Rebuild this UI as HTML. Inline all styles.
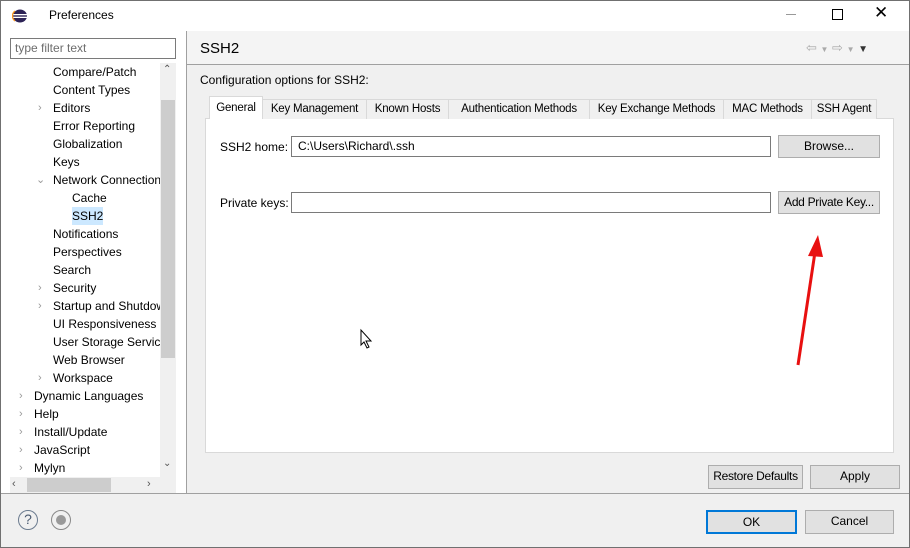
<!DOCTYPE html>
<html><head><style>
*{box-sizing:border-box;margin:0;padding:0}
body{width:910px;height:548px;position:relative;background:#f0f0f0;font-family:"Liberation Sans",sans-serif;font-size:12px;color:#000;overflow:hidden}
.a{position:absolute}
.btn{position:absolute;background:#e1e1e1;border:1px solid #adadad;text-align:center;line-height:21px;font-size:12px}
.tree div{position:absolute;white-space:nowrap;height:18px;line-height:18px}
.chev{color:#999;font-size:11px}
.tab{position:absolute;top:99px;height:20px;line-height:19px;border:1px solid #d9d9d9;border-bottom:none;background:#f0f0f0;font-size:11.5px;text-align:center;white-space:nowrap;overflow:hidden;letter-spacing:-0.2px}
</style></head><body>
<div class="a" style="left:0;top:0;width:910px;height:548px;border:1px solid #707070"></div>
<div class="a" style="left:1px;top:1px;width:908px;height:30px;background:#fff"></div>
<svg class="a" style="left:12px;top:8px" width="16" height="16"><ellipse cx="8" cy="8" rx="7" ry="6.5" fill="#2c2255"/><rect x="1" y="6" width="14" height="1.3" fill="#fff"/><rect x="1" y="8.7" width="14" height="1.3" fill="#fff"/><path d="M3 3 A7 6.5 0 0 0 3 13" stroke="#f7941e" stroke-width="1.3" fill="none"/></svg>
<div class="a" style="left:49px;top:8px;font-size:12px">Preferences</div>
<div class="a" style="left:786px;top:14px;width:10px;height:1px;background:#999"></div>
<div class="a" style="left:832px;top:9px;width:11px;height:11px;border:1px solid #000"></div>
<div class="a" style="left:874px;top:3px;font-size:17px">✕</div>

<div class="a" style="left:1px;top:31px;width:185px;height:462px;background:#fff"></div>
<div class="a" style="left:10px;top:38px;width:166px;height:21px;border:1px solid #7a7a7a;background:#fff;color:#6d6d6d;line-height:19px;padding-left:4px">type filter text</div>
<div class="a" style="left:160px;top:63px;width:16px;height:414px;background:#f0f0f0"></div>
<div class="a" style="left:161px;top:100px;width:14px;height:258px;background:#cdcdcd"></div>
<div class="a" style="left:163px;top:64px;font-size:10px;color:#555">&#8963;</div>
<div class="a" style="left:163px;top:458px;font-size:10px;color:#555">&#8964;</div>
<div class="a" style="left:10px;top:477px;width:166px;height:16px;background:#f0f0f0"></div>
<div class="a" style="left:27px;top:478px;width:84px;height:14px;background:#cdcdcd"></div>
<div class="a" style="left:12px;top:478px;color:#555;font-size:11px">‹</div>
<div class="a" style="left:147px;top:478px;color:#555;font-size:11px">›</div>
<div class="a" style="left:72px;top:207px;width:31px;height:18px;background:#cce8ff"></div>
<div class="tree">
<div style="left:53px;top:63px">Compare/Patch</div>
<div style="left:53px;top:81px">Content Types</div>
<div class="chev" style="left:38px;top:99px">›</div><div style="left:53px;top:99px">Editors</div>
<div style="left:53px;top:117px">Error Reporting</div>
<div style="left:53px;top:135px">Globalization</div>
<div style="left:53px;top:153px">Keys</div>
<div class="chev" style="left:36px;top:171px">⌄</div><div style="left:53px;top:171px;width:107px;overflow:hidden">Network Connections</div>
<div style="left:72px;top:189px">Cache</div>
<div style="left:72px;top:207px">SSH2</div>
<div style="left:53px;top:225px">Notifications</div>
<div style="left:53px;top:243px">Perspectives</div>
<div style="left:53px;top:261px">Search</div>
<div class="chev" style="left:38px;top:279px">›</div><div style="left:53px;top:279px">Security</div>
<div class="chev" style="left:38px;top:297px">›</div><div style="left:53px;top:297px;width:107px;overflow:hidden">Startup and Shutdown</div>
<div style="left:53px;top:315px;width:107px;overflow:hidden">UI Responsiveness Monitoring</div>
<div style="left:53px;top:333px;width:107px;overflow:hidden">User Storage Service</div>
<div style="left:53px;top:351px">Web Browser</div>
<div class="chev" style="left:38px;top:369px">›</div><div style="left:53px;top:369px">Workspace</div>
<div class="chev" style="left:19px;top:387px">›</div><div style="left:34px;top:387px">Dynamic Languages</div>
<div class="chev" style="left:19px;top:405px">›</div><div style="left:34px;top:405px">Help</div>
<div class="chev" style="left:19px;top:423px">›</div><div style="left:34px;top:423px">Install/Update</div>
<div class="chev" style="left:19px;top:441px">›</div><div style="left:34px;top:441px">JavaScript</div>
<div class="chev" style="left:19px;top:459px">›</div><div style="left:34px;top:459px">Mylyn</div>
</div>
<div class="a" style="left:186px;top:31px;width:1px;height:462px;background:#a0a0a0"></div>
<div class="a" style="left:187px;top:31px;width:722px;height:34px;background:#f4f4f4;border-bottom:1px solid #a0a0a0"></div>
<div class="a" style="left:200px;top:40px;font-size:15px">SSH2</div>
<div class="a" style="left:806px;top:40px;color:#aaa;font-size:13px">⇦ <span style="font-size:8px">▼</span> ⇨ <span style="font-size:8px">▼</span> <span style="color:#333;font-size:10px">▼</span></div>
<div class="a" style="left:200px;top:73px">Configuration options for SSH2:</div>

<div class="a" style="left:205px;top:118px;width:689px;height:335px;background:#fff;border:1px solid #d9d9d9"></div>
<div class="tab" style="left:209px;width:54px;top:96px;height:23px;background:#fff;line-height:22px">General</div>
<div class="tab" style="left:262px;width:105px">Key Management</div>
<div class="tab" style="left:366px;width:83px">Known Hosts</div>
<div class="tab" style="left:448px;width:142px">Authentication Methods</div>
<div class="tab" style="left:589px;width:135px">Key Exchange Methods</div>
<div class="tab" style="left:723px;width:89px">MAC Methods</div>
<div class="tab" style="left:811px;width:66px">SSH Agent</div>

<div class="a" style="left:220px;top:140px">SSH2 home:</div>
<div class="a" style="left:291px;top:136px;width:480px;height:21px;border:1px solid #7a7a7a;background:#fff;line-height:19px;padding-left:6px">C:\Users\Richard\.ssh</div>
<div class="btn" style="left:778px;top:135px;width:102px;height:23px">Browse...</div>
<div class="a" style="left:220px;top:196px">Private keys:</div>
<div class="a" style="left:291px;top:192px;width:480px;height:21px;border:1px solid #7a7a7a;background:#fff"></div>
<div class="btn" style="left:778px;top:191px;width:102px;height:23px;letter-spacing:-0.3px">Add Private Key...</div>
<svg class="a" style="left:0;top:0" width="910" height="548"><line x1="798" y1="365" x2="815" y2="252" stroke="#e81010" stroke-width="3"/><polygon points="818,235 808,256 823,257" fill="#e81010"/><path d="M361 330 L361 345 L364 342 L367 348 L369 347 L366 341 L371 341 Z" fill="#fff" stroke="#000" stroke-width="1"/></svg>

<div class="btn" style="left:708px;top:465px;width:95px;height:24px;letter-spacing:-0.3px">Restore Defaults</div>
<div class="btn" style="left:810px;top:465px;width:90px;height:24px">Apply</div>
<div class="a" style="left:1px;top:493px;width:908px;height:1px;background:#a0a0a0"></div>
<div class="a" style="left:18px;top:510px;width:20px;height:20px;border:1.5px solid #6b7b8f;border-radius:50%;text-align:center;line-height:17px;font-size:14px;color:#4a5a70">?</div>
<div class="a" style="left:51px;top:510px;width:20px;height:20px;border:1.5px solid #888;border-radius:50%"></div>
<div class="a" style="left:56px;top:515px;width:10px;height:10px;border-radius:50%;background:#999"></div>
<div class="btn" style="left:706px;top:510px;width:91px;height:24px;border:2px solid #0078d7;line-height:20px">OK</div>
<div class="btn" style="left:805px;top:510px;width:89px;height:24px">Cancel</div>
</body></html>
